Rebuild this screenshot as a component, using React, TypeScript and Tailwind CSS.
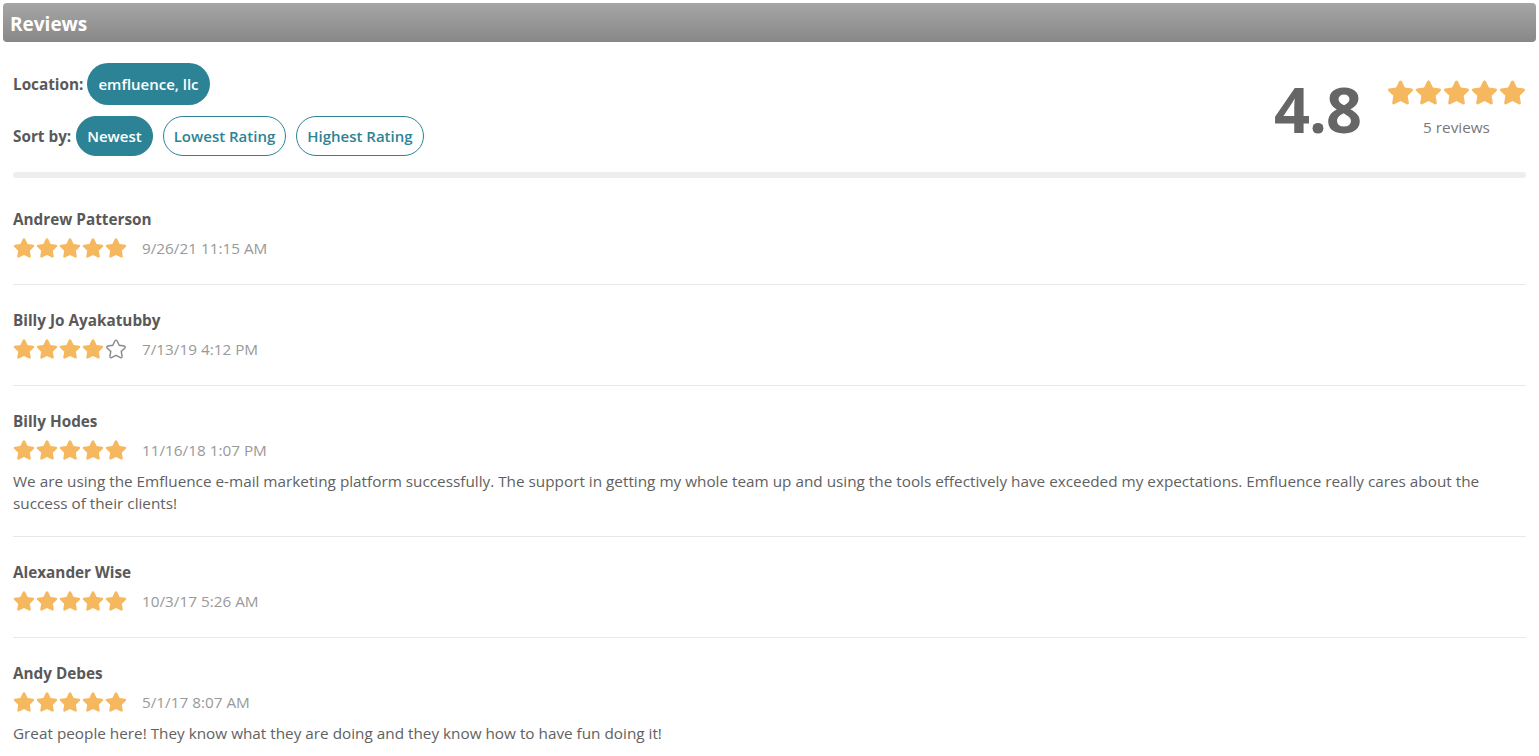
import React from "react"

interface Review {
  name: string
  rating: number
  date: string
  text?: string
}

const REVIEWS: Review[] = [
  { name: "Andrew Patterson", rating: 5, date: "9/26/21 11:15 AM" },
  { name: "Billy Jo Ayakatubby", rating: 4, date: "7/13/19 4:12 PM" },
  {
    name: "Billy Hodes",
    rating: 5,
    date: "11/16/18 1:07 PM",
    text: "We are using the Emfluence e-mail marketing platform successfully. The support in getting my whole team up and using the tools effectively have exceeded my expectations. Emfluence really cares about the success of their clients!",
  },
  { name: "Alexander Wise", rating: 5, date: "10/3/17 5:26 AM" },
  {
    name: "Andy Debes",
    rating: 5,
    date: "5/1/17 8:07 AM",
    text: "Great people here! They know what they are doing and they know how to have fun doing it!",
  },
]

const STAR_PATH =
  "M259.3 17.8L194 150.2 47.9 171.5c-26.2 3.8-36.7 36.1-17.7 54.6l105.7 103-25 145.5c-4.5 26.3 23.2 46 46.4 33.7L288 439.6l130.7 68.7c23.2 12.2 50.9-7.4 46.4-33.7l-25-145.5 105.7-103c19-18.5 8.5-50.8-17.7-54.6L382 150.2 316.7 17.8c-11.7-23.6-45.6-23.9-57.4 0z"

function Star({ filled, size }: { filled: boolean; size: number }) {
  return (
    <svg width={size} height={size} viewBox="0 0 576 576" className="shrink-0">
      <g transform="translate(0 30)">
        {filled ? (
          <path d={STAR_PATH} fill="#f5b85e" />
        ) : (
          <path d={STAR_PATH} fill="none" stroke="#8a8a8a" strokeWidth={42} transform="translate(29 26) scale(0.9)" />
        )}
      </g>
    </svg>
  )
}

function Stars({ rating, size, gap }: { rating: number; size: number; gap: string }) {
  return (
    <div className={`flex ${gap}`}>
      {[0, 1, 2, 3, 4].map((i) => (
        <Star key={i} filled={i < rating} size={size} />
      ))}
    </div>
  )
}

export default function App() {
  return (
    <div className="bg-white min-h-screen pt-[3px] font-['Open_Sans',sans-serif] text-[15.3px]">
      {/* Header */}
      <div className="mx-[3px] h-[39px] rounded-[4px] bg-gradient-to-b from-[#a6a6a6] to-[#888888] flex items-center px-[7px] pt-[3px]">
        <h1 className="text-white font-bold text-[19px] leading-none">Reviews</h1>
      </div>

      <div className="px-[13px]">
        {/* Filters + summary */}
        <div className="flex items-center justify-between pt-[21px]">
          <div className="flex flex-col gap-[11px]">
            <div className="flex items-center gap-[4px]">
              <span className="font-bold text-[#595959]">Location:</span>
              <span className="h-[42px] px-[11px] rounded-full bg-[#2d8396] text-white text-[15px] font-semibold flex items-center">
                emfluence, llc
              </span>
            </div>
            <div className="flex items-center">
              <span className="font-bold text-[#595959] mr-[5px]">Sort by:</span>
              <div className="flex gap-[10px] text-[15px]">
                <button className="h-[40px] px-[10px] rounded-full bg-[#2d8396] border border-[#2d8396] text-white font-semibold">
                  Newest
                </button>
                <button className="h-[40px] px-[10px] rounded-full border border-[#2d8396] text-[#2d8396] font-semibold">
                  Lowest Rating
                </button>
                <button className="h-[40px] px-[10px] rounded-full border border-[#2d8396] text-[#2d8396] font-semibold">
                  Highest Rating
                </button>
              </div>
            </div>
          </div>

          <div className="flex items-center gap-[26px] -mt-[2px]">
            <span className="text-[63px] font-bold leading-none text-[#666666] tracking-[-1px]">4.8</span>
            <div className="flex flex-col items-center">
              <Stars rating={5} size={27} gap="gap-[1px]" />
              <span className="text-[#777777] mt-[10px]">5 reviews</span>
            </div>
          </div>
        </div>

        <div className="mt-[16px] h-[6px] rounded-full bg-[#eeeeee]" />

        {/* Reviews list */}
        <div className="mt-[6px]">
          {REVIEWS.map((r, i) => (
            <div
              key={i}
              className={`pt-[25px] ${r.text ? "pb-[22px]" : "pb-[25px]"} ${i < REVIEWS.length - 1 ? "border-b border-[#e8e8e8]" : ""}`}
            >
              <div className="font-bold text-[#595959] leading-[20px]">{r.name}</div>
              <div className="flex items-center mt-[8px] h-[22px]">
                <Stars rating={r.rating} size={22} gap="gap-[1px]" />
                <span className="ml-[15px] text-[#999999]">{r.date}</span>
              </div>
              {r.text && <p className="mt-[9px] leading-[22px] text-[#616161]">{r.text}</p>}
            </div>
          ))}
        </div>
      </div>
    </div>
  )
}
